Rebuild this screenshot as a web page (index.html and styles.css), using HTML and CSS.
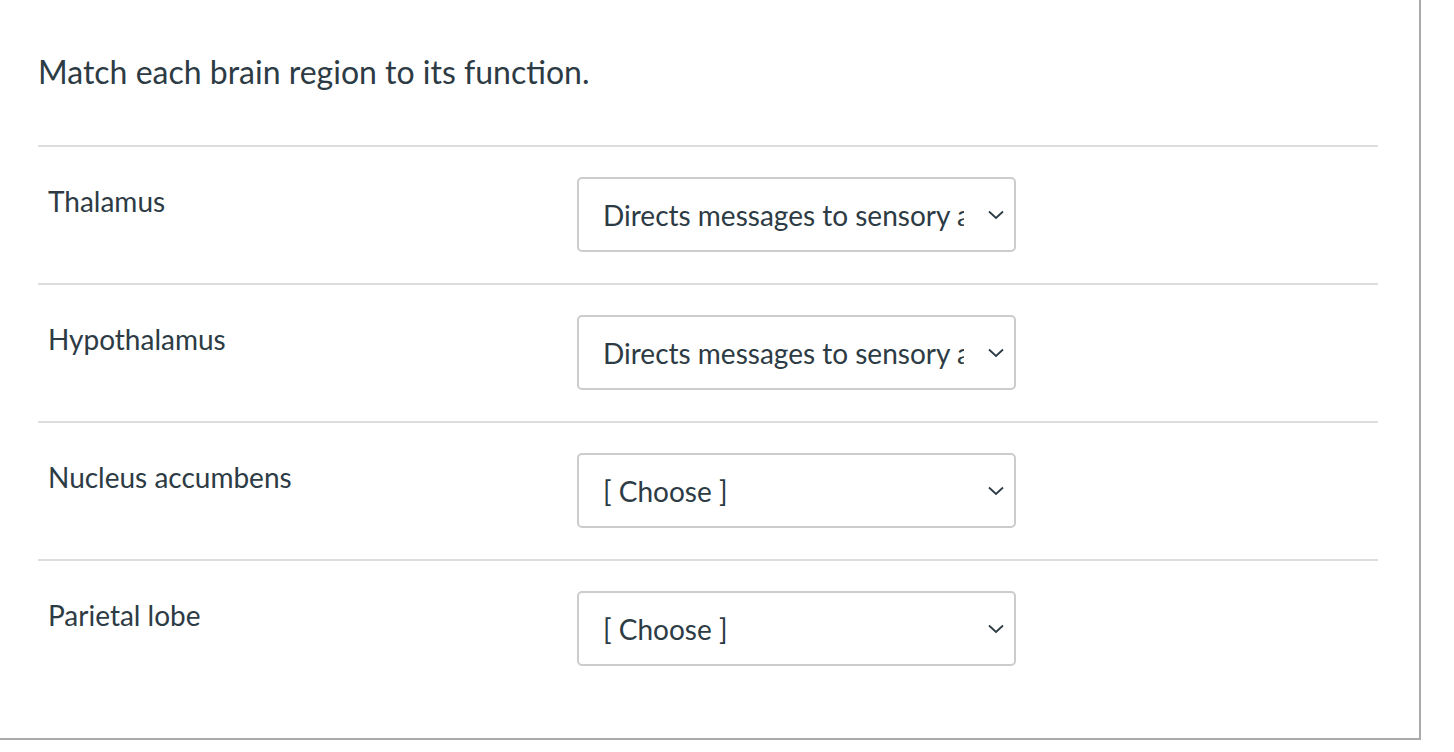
FILE: index.html
```html
<!DOCTYPE html>
<html lang="en">
<head>
<meta charset="utf-8">
<title>Matching question</title>
<link rel="stylesheet" href="styles.css">
</head>
<body>
<div class="question">
  <div class="question-text">Match each brain region to its function.</div>
  <div class="answers">
    <div class="answer-row">
      <div class="answer-label">Thalamus</div>
      <div class="select">
        <span class="select-value">Directs messages to sensory areas in the cerebral cortex</span>
        <svg class="chevron" width="18" height="11" viewBox="0 0 18 11"><path d="M2 2.5 L9 9 L16 2.5" fill="none" stroke="#2d3b45" stroke-width="1.8"/></svg>
      </div>
    </div>
    <div class="answer-row">
      <div class="answer-label">Hypothalamus</div>
      <div class="select">
        <span class="select-value">Directs messages to sensory areas in the cerebral cortex</span>
        <svg class="chevron" width="18" height="11" viewBox="0 0 18 11"><path d="M2 2.5 L9 9 L16 2.5" fill="none" stroke="#2d3b45" stroke-width="1.8"/></svg>
      </div>
    </div>
    <div class="answer-row">
      <div class="answer-label">Nucleus accumbens</div>
      <div class="select">
        <span class="select-value">[ Choose ]</span>
        <svg class="chevron" width="18" height="11" viewBox="0 0 18 11"><path d="M2 2.5 L9 9 L16 2.5" fill="none" stroke="#2d3b45" stroke-width="1.8"/></svg>
      </div>
    </div>
    <div class="answer-row">
      <div class="answer-label">Parietal lobe</div>
      <div class="select">
        <span class="select-value">[ Choose ]</span>
        <svg class="chevron" width="18" height="11" viewBox="0 0 18 11"><path d="M2 2.5 L9 9 L16 2.5" fill="none" stroke="#2d3b45" stroke-width="1.8"/></svg>
      </div>
    </div>
  </div>
</div>
</body>
</html>
```
FILE: styles.css
```css
html, body {
  margin: 0;
  padding: 0;
  background: #ffffff;
}
body {
  font-family: Lato, "Open Sans", "Liberation Sans", sans-serif;
  color: #2d3b45;
}
.question {
  width: 1340px;
  height: 738px;
  padding: 0 41px 0 38px;
  border-right: 2px solid #aaaaaa;
  border-bottom: 2px solid #aaaaaa;
}
.question-text {
  padding-top: 51px;
  font-size: 32px;
  line-height: 42px;
  margin-bottom: 52px;
}
.answer-row {
  border-top: 2px solid #dddddd;
  padding: 30px 0 31px;
  display: grid;
  grid-template-columns: 539px 439px;
  align-items: start;
}
.answer-label {
  padding: 3px 0 0 10px;
  font-size: 28px;
  line-height: 42px;
}
.select {
  box-sizing: border-box;
  height: 75px;
  border: 2px solid #cccccc;
  border-radius: 5px;
  display: flex;
  align-items: center;
  padding: 0 9px 0 24px;
  font-size: 28px;
}
.select-value {
  flex: 1;
  overflow: hidden;
  white-space: nowrap;
  margin-right: 23px;
}
.chevron {
  flex: none;
}
```
